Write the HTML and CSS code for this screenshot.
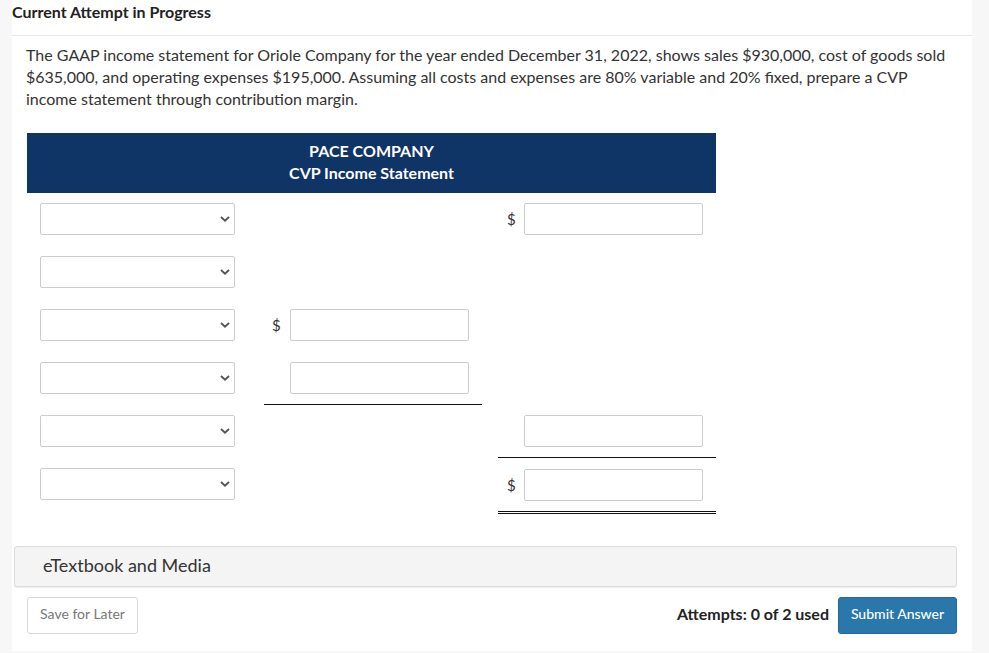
FILE: index.html
```html
<!DOCTYPE html>
<html lang="en">
<head>
<meta charset="utf-8">
<title>Current Attempt in Progress</title>
<link rel="stylesheet" href="styles.css">
</head>
<body>
<div class="page">
  <div class="head">Current Attempt in Progress</div>
  <div class="content">
    <p class="question">The GAAP income statement for Oriole Company for the year ended December 31, 2022, shows sales $930,000, cost of goods sold $635,000, and operating expenses $195,000. Assuming all costs and expenses are 80% variable and 20% fixed, prepare a CVP income statement through contribution margin.</p>

    <div class="sheet">
      <div class="sheet-head">
        <div>PACE COMPANY</div>
        <div>CVP Income Statement</div>
      </div>

      <!-- row 1 -->
      <div class="cell c1"><div class="sel"><select></select><svg class="chev" viewBox="0 0 10 6" width="10" height="6"><path d="M1 1 L5 4.6 L9 1" fill="none" stroke="#555" stroke-width="1.9"/></svg></div></div>
      <div class="cell c2"></div>
      <div class="cell c3"><div class="amt a3"><span class="dol">$</span><input type="text"></div></div>

      <!-- row 2 -->
      <div class="cell c1"><div class="sel"><select></select><svg class="chev" viewBox="0 0 10 6" width="10" height="6"><path d="M1 1 L5 4.6 L9 1" fill="none" stroke="#555" stroke-width="1.9"/></svg></div></div>
      <div class="cell c2"></div>
      <div class="cell c3"></div>

      <!-- row 3 -->
      <div class="cell c1"><div class="sel"><select></select><svg class="chev" viewBox="0 0 10 6" width="10" height="6"><path d="M1 1 L5 4.6 L9 1" fill="none" stroke="#555" stroke-width="1.9"/></svg></div></div>
      <div class="cell c2"><div class="amt a2"><span class="dol">$</span><input type="text"></div></div>
      <div class="cell c3"></div>

      <!-- row 4 -->
      <div class="cell c1"><div class="sel"><select></select><svg class="chev" viewBox="0 0 10 6" width="10" height="6"><path d="M1 1 L5 4.6 L9 1" fill="none" stroke="#555" stroke-width="1.9"/></svg></div></div>
      <div class="cell c2"><div class="amt a2 under"><span class="dol"></span><input type="text"></div></div>
      <div class="cell c3"></div>

      <!-- row 5 -->
      <div class="cell c1"><div class="sel"><select></select><svg class="chev" viewBox="0 0 10 6" width="10" height="6"><path d="M1 1 L5 4.6 L9 1" fill="none" stroke="#555" stroke-width="1.9"/></svg></div></div>
      <div class="cell c2"></div>
      <div class="cell c3"><div class="amt a3 under"><span class="dol"></span><input type="text"></div></div>

      <!-- row 6 -->
      <div class="cell c1"><div class="sel"><select></select><svg class="chev" viewBox="0 0 10 6" width="10" height="6"><path d="M1 1 L5 4.6 L9 1" fill="none" stroke="#555" stroke-width="1.9"/></svg></div></div>
      <div class="cell c2"></div>
      <div class="cell c3"><div class="amt a3 dbl"><span class="dol">$</span><input type="text"></div></div>
    </div>

    <div class="media">eTextbook and Media</div>

    <div class="footer">
      <button class="btn save">Save for Later</button>
      <div class="right">
        <span class="attempts">Attempts: 0 of 2 used</span>
        <button class="btn submit">Submit Answer</button>
      </div>
    </div>
  </div>
</div>
</body>
</html>
```

FILE: styles.css
```css
* { box-sizing: border-box; }

body {
  margin: 0;
  background: #f7f7f7;
  font-family: Lato, "Open Sans", Arial, sans-serif;
  color: #333;
}

.page {
  margin-left: 12px;
  width: 960px;
  height: 651px;
  background: #fff;
}

.head {
  height: 36px;
  line-height: 23px;
  font-size: 16px;
  font-weight: 700;
  color: #222;
  border-bottom: 1px solid #e8e8e8;
}

.content {
  padding: 8px 15px 0 14px;
}

.question {
  margin: 0;
  font-size: 16px;
  line-height: 22px;
  color: #333;
}

.sheet {
  margin-top: 23px;
  margin-left: 1px;
  width: 689px;
  display: grid;
  grid-template-columns: 223px 232px 234px;
  grid-template-rows: 60px 53px 53px 53px 53px 53px 56px;
}

.sheet-head {
  grid-column: 1 / -1;
  background: #0f3466;
  color: #fff;
  font-weight: 700;
  font-size: 16px;
  line-height: 22px;
  text-align: center;
  padding-top: 7px;
}

.cell { height: 100%; }

.c1 { padding: 10px 15px 0 13px; }

.sel {
  position: relative;
  width: 195px;
  height: 32px;
}

.sel select {
  appearance: none;
  -webkit-appearance: none;
  width: 100%;
  height: 100%;
  border: 1px solid #ccc;
  border-radius: 2px;
  background: #fff;
  margin: 0;
}

.chev {
  position: absolute;
  right: 5px;
  top: 13px;
}

.amt {
  height: 100%;
  display: flex;
  align-items: flex-start;
  padding-top: 10px;
}

.a2 { margin-left: 14px; }
.a3 { margin-left: 16px; }

.dol {
  width: 26px;
  height: 32px;
  line-height: 32px;
  font-size: 15px;
  color: #333;
  padding-left: 8px;
}
.a3 .dol { padding-left: 9px; }

.amt input {
  width: 179px;
  height: 32px;
  border: 1px solid #ccc;
  border-radius: 2px;
  margin: 0;
  padding: 0;
  background: #fff;
}

.under { border-bottom: 1px solid #111; }
.dbl { border-bottom: 3px double #111; padding-top: 11px; }

.media {
  margin-top: 32px;
  margin-left: -12px;
  height: 41px;
  background: #f4f4f4;
  border: 1px solid #dcdcdc;
  border-radius: 3px;
  box-shadow: 0 1px 1px rgba(0,0,0,0.08);
  font-size: 18px;
  line-height: 36px;
  padding-left: 28px;
  color: #333;
}

.footer {
  margin-top: 10px;
  display: flex;
  justify-content: space-between;
  align-items: center;
}

.btn {
  font-family: Lato, "Open Sans", Arial, sans-serif;
  height: 37px;
  font-size: 14px;
  line-height: 16px;
  padding: 0 0 3px;
  border-radius: 3px;
  margin: 0;
  cursor: pointer;
}

.save {
  margin-left: 1px;
  width: 111px;
  background: #fff;
  border: 1px solid #d8d8d8;
  color: #777;
}

.right {
  display: flex;
  align-items: center;
  gap: 9px;
}

.attempts {
  font-size: 16px;
  font-weight: 700;
  color: #222;
  padding-bottom: 4px;
}

.submit {
  width: 119px;
  background: #2a78ab;
  border: 1px solid #226a99;
  color: #fff;
  font-weight: 500;
}
```
